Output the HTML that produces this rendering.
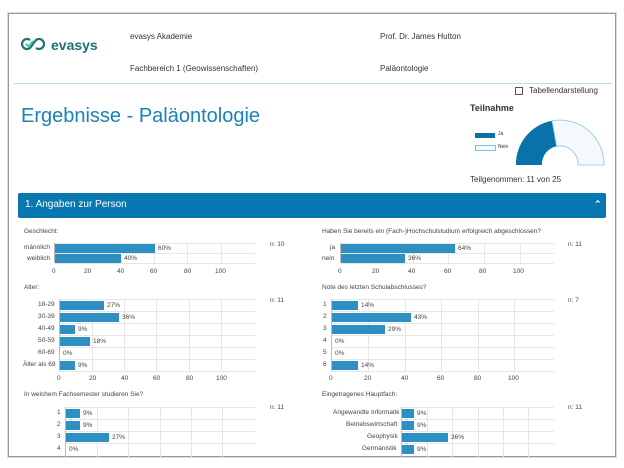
<!DOCTYPE html><html><head><meta charset="utf-8"><style>
body{margin:0;width:624px;height:468px;background:#fff;font-family:"Liberation Sans",sans-serif;position:relative;overflow:hidden}
.a{position:absolute;white-space:nowrap}
.s{font-size:6.5px;color:#444}
.t{font-size:8px;color:#333}
.bar{position:absolute;background:#2e8fc2;height:9px}
.g{position:absolute;border-left:1px solid #e6e6e6;top:0;bottom:0}
.h{position:absolute;border-top:1px solid #e6e6e6;left:0;right:0}
</style></head><body>
<div class="a" style="left:8px;top:13px;width:606px;height:442px;border:1px solid #999;box-shadow:0 0 0 1px #ddd"></div>
<div class="a" style="left:12px;top:20px;width:600px;height:436px;background:#fff"></div>
<svg class="a" style="left:21px;top:37px" width="24" height="14" viewBox="0 0 24 14"><path d="M9 3 A5 5 0 1 0 9 11 L15 3 A5 5 0 1 1 15 11" fill="none" stroke="#1f6e78" stroke-width="2.2"/><path d="M5 7 L8 9.5 L12 4" fill="none" stroke="#3ec79a" stroke-width="2"/></svg>
<div class="a" style="left:51px;top:37px;font-size:14px;font-weight:bold;color:#1f6e78">evasys</div>
<div class="a t" style="left:130px;top:32px">evasys Akademie</div>
<div class="a t" style="left:380px;top:32px">Prof. Dr. James Hutton</div>
<div class="a t" style="left:130px;top:64px">Fachbereich 1 (Geowissenschaften)</div>
<div class="a t" style="left:380px;top:64px">Paläontologie</div>
<div class="a" style="left:14px;top:83px;width:598px;height:1px;background:#b9dcee"></div>
<div class="a" style="left:515px;top:87px;width:6px;height:6px;border:1px solid #555"></div>
<div class="a t" style="left:529px;top:86px">Tabellendarstellung</div>
<div class="a" style="left:21px;top:105px;font-size:20px;color:#1a82b8">Ergebnisse - Paläontologie</div>
<div class="a" style="left:470px;top:103px;font-size:9px;font-weight:bold;color:#333">Teilnahme</div>
<div class="a" style="left:475px;top:133px;width:20px;height:5px;background:#0a72aa"></div>
<div class="a" style="left:475px;top:145px;width:19px;height:4px;border:1px solid #7fbfe0;background:#f4f9fc"></div>
<div class="a" style="left:498px;top:131px;font-size:5px;color:#333">Ja</div>
<div class="a" style="left:498px;top:144px;font-size:5px;color:#333">Nein</div>
<svg class="a" style="left:0;top:0" width="624" height="200"><path d="M516 165 A44 44 0 0 1 552 120.8 L556.6 146.3 A18 18 0 0 0 542 165 Z" fill="#0a72aa"/><path d="M552 120.8 A44 44 0 0 1 604 165 L578 165 A18 18 0 0 0 556.6 146.3 Z" fill="#f4f9fc" stroke="#8ec6e3" stroke-width="0.8"/></svg>
<div class="a t" style="left:470px;top:175px">Teilgenommen: 11 von 25</div>
<div class="a" style="left:18px;top:193px;width:588px;height:25px;background:#0a78b0;border-radius:2px"></div>
<div class="a" style="left:25px;top:199px;font-size:10px;color:#fff">1. Angaben zur Person</div>
<div class="a" style="left:594px;top:199px;font-size:9px;color:#fff;font-weight:bold">&#8963;</div>

<div class="a s" style="left:24px;top:228px">Geschlecht:</div>
<div class="a" style="left:54px;top:243px;width:200px;height:20px;border-left:1px solid #bbb">
<div class="g" style="left:33px"></div><div class="g" style="left:66px"></div><div class="g" style="left:99px"></div><div class="g" style="left:132px"></div><div class="g" style="left:166px"></div><div class="h" style="top:0"></div><div class="h" style="top:10px"></div><div class="h" style="top:20px"></div>
<div class="bar" style="left:0;top:1px;width:100px"></div><div class="bar" style="left:0;top:11px;width:66px"></div>
<div class="a s" style="left:103px;top:2px">60%</div><div class="a s" style="left:69px;top:12px">40%</div></div>
<div class="a s" style="left:24px;top:244px">männlich</div><div class="a s" style="left:27px;top:255px">weiblich</div>
<div class="a s" style="left:52px;top:268px">0</div><div class="a s" style="left:84px;top:268px">20</div><div class="a s" style="left:117px;top:268px">40</div><div class="a s" style="left:150px;top:268px">60</div><div class="a s" style="left:184px;top:268px">80</div><div class="a s" style="left:215px;top:268px">100</div>
<div class="a s" style="left:270px;top:241px">n: 10</div>

<div class="a s" style="left:24px;top:284px">Alter:</div>
<div class="a" style="left:59px;top:299px;width:195px;height:72px;border-left:1px solid #bbb">
<div class="g" style="left:32px"></div><div class="g" style="left:64px"></div><div class="g" style="left:96px"></div><div class="g" style="left:129px"></div><div class="g" style="left:161px"></div>
<div class="h" style="top:0"></div><div class="h" style="top:12px"></div><div class="h" style="top:24px"></div><div class="h" style="top:36px"></div><div class="h" style="top:48px"></div><div class="h" style="top:60px"></div><div class="h" style="top:72px"></div>
<div class="bar" style="top:2px;left:0;width:44px"></div><div class="bar" style="top:14px;left:0;width:59px"></div><div class="bar" style="top:26px;left:0;width:15px"></div><div class="bar" style="top:38px;left:0;width:30px"></div><div class="bar" style="top:62px;left:0;width:15px"></div>
<div class="a s" style="left:47px;top:3px">27%</div><div class="a s" style="left:62px;top:15px">36%</div><div class="a s" style="left:18px;top:27px">9%</div><div class="a s" style="left:33px;top:39px">18%</div><div class="a s" style="left:3px;top:51px">0%</div><div class="a s" style="left:18px;top:63px">9%</div></div>
<div class="a s" style="left:38px;top:301px">18-29</div><div class="a s" style="left:38px;top:313px">30-39</div><div class="a s" style="left:38px;top:325px">40-49</div><div class="a s" style="left:38px;top:337px">50-59</div><div class="a s" style="left:38px;top:349px">60-69</div><div class="a s" style="left:23px;top:361px">Älter als 69</div>
<div class="a s" style="left:57px;top:375px">0</div><div class="a s" style="left:89px;top:375px">20</div><div class="a s" style="left:121px;top:375px">40</div><div class="a s" style="left:153px;top:375px">60</div><div class="a s" style="left:186px;top:375px">80</div><div class="a s" style="left:216px;top:375px">100</div>
<div class="a s" style="left:270px;top:297px">n: 11</div>

<div class="a s" style="left:24px;top:391px">In welchem Fachsemester studieren Sie?</div>
<div class="a" style="left:65px;top:407px;width:189px;height:50px;border-left:1px solid #bbb">
<div class="g" style="left:31px"></div><div class="g" style="left:62px"></div><div class="g" style="left:94px"></div><div class="g" style="left:125px"></div><div class="g" style="left:156px"></div>
<div class="h" style="top:0"></div><div class="h" style="top:12px"></div><div class="h" style="top:24px"></div><div class="h" style="top:36px"></div>
<div class="bar" style="top:2px;left:0;width:14px"></div><div class="bar" style="top:14px;left:0;width:14px"></div><div class="bar" style="top:26px;left:0;width:43px"></div>
<div class="a s" style="left:17px;top:3px">9%</div><div class="a s" style="left:17px;top:15px">9%</div><div class="a s" style="left:46px;top:27px">27%</div><div class="a s" style="left:3px;top:39px">0%</div></div>
<div class="a s" style="left:57px;top:409px">1</div><div class="a s" style="left:57px;top:421px">2</div><div class="a s" style="left:57px;top:433px">3</div><div class="a s" style="left:57px;top:445px">4</div>
<div class="a s" style="left:270px;top:404px">n: 11</div>

<div class="a s" style="left:322px;top:228px">Haben Sie bereits ein (Fach-)Hochschulstudium erfolgreich abgeschlossen?</div>
<div class="a" style="left:340px;top:243px;width:213px;height:20px;border-left:1px solid #bbb">
<div class="g" style="left:36px"></div><div class="g" style="left:72px"></div><div class="g" style="left:107px"></div><div class="g" style="left:143px"></div><div class="g" style="left:179px"></div><div class="h" style="top:0"></div><div class="h" style="top:10px"></div><div class="h" style="top:20px"></div>
<div class="bar" style="left:0;top:1px;width:114px"></div><div class="bar" style="left:0;top:11px;width:64px"></div>
<div class="a s" style="left:117px;top:2px">64%</div><div class="a s" style="left:67px;top:12px">36%</div></div>
<div class="a s" style="left:330px;top:244px">ja</div><div class="a s" style="left:322px;top:255px">nein</div>
<div class="a s" style="left:338px;top:268px">0</div><div class="a s" style="left:372px;top:268px">20</div><div class="a s" style="left:408px;top:268px">40</div><div class="a s" style="left:444px;top:268px">60</div><div class="a s" style="left:479px;top:268px">80</div><div class="a s" style="left:513px;top:268px">100</div>
<div class="a s" style="left:568px;top:241px">n: 11</div>

<div class="a s" style="left:322px;top:284px">Note des letzten Schulabschlusses?</div>
<div class="a" style="left:331px;top:299px;width:222px;height:72px;border-left:1px solid #bbb">
<div class="g" style="left:36px"></div><div class="g" style="left:73px"></div><div class="g" style="left:109px"></div><div class="g" style="left:146px"></div><div class="g" style="left:182px"></div>
<div class="h" style="top:0"></div><div class="h" style="top:12px"></div><div class="h" style="top:24px"></div><div class="h" style="top:36px"></div><div class="h" style="top:48px"></div><div class="h" style="top:60px"></div><div class="h" style="top:72px"></div>
<div class="bar" style="top:2px;left:0;width:26px"></div><div class="bar" style="top:14px;left:0;width:79px"></div><div class="bar" style="top:26px;left:0;width:53px"></div><div class="bar" style="top:62px;left:0;width:26px"></div>
<div class="a s" style="left:29px;top:3px">14%</div><div class="a s" style="left:82px;top:15px">43%</div><div class="a s" style="left:56px;top:27px">29%</div><div class="a s" style="left:3px;top:39px">0%</div><div class="a s" style="left:3px;top:51px">0%</div><div class="a s" style="left:29px;top:63px">14%</div></div>
<div class="a s" style="left:323px;top:301px">1</div><div class="a s" style="left:323px;top:313px">2</div><div class="a s" style="left:323px;top:325px">3</div><div class="a s" style="left:323px;top:337px">4</div><div class="a s" style="left:323px;top:349px">5</div><div class="a s" style="left:323px;top:361px">6</div>
<div class="a s" style="left:329px;top:375px">0</div><div class="a s" style="left:364px;top:375px">20</div><div class="a s" style="left:401px;top:375px">40</div><div class="a s" style="left:437px;top:375px">60</div><div class="a s" style="left:474px;top:375px">80</div><div class="a s" style="left:508px;top:375px">100</div>
<div class="a s" style="left:568px;top:297px">n: 7</div>

<div class="a s" style="left:322px;top:391px">Eingetragenes Hauptfach:</div>
<div class="a" style="left:401px;top:407px;width:152px;height:50px;border-left:1px solid #bbb">
<div class="g" style="left:25px"></div><div class="g" style="left:50px"></div><div class="g" style="left:76px"></div><div class="g" style="left:101px"></div><div class="g" style="left:126px"></div>
<div class="h" style="top:0"></div><div class="h" style="top:12px"></div><div class="h" style="top:24px"></div><div class="h" style="top:36px"></div>
<div class="bar" style="top:2px;left:0;width:12px"></div><div class="bar" style="top:14px;left:0;width:12px"></div><div class="bar" style="top:26px;left:0;width:46px"></div><div class="bar" style="top:38px;left:0;width:12px"></div>
<div class="a s" style="left:15px;top:3px">9%</div><div class="a s" style="left:15px;top:15px">9%</div><div class="a s" style="left:49px;top:27px">36%</div><div class="a s" style="left:15px;top:39px">9%</div></div>
<div class="a s" style="left:333px;top:409px">Angewandte Informatik</div><div class="a s" style="left:346px;top:421px">Betriebswirtschaft</div><div class="a s" style="left:367px;top:433px">Geophysik</div><div class="a s" style="left:362px;top:445px">Germanistik</div>
<div class="a s" style="left:568px;top:404px">n: 11</div>
</body></html>
